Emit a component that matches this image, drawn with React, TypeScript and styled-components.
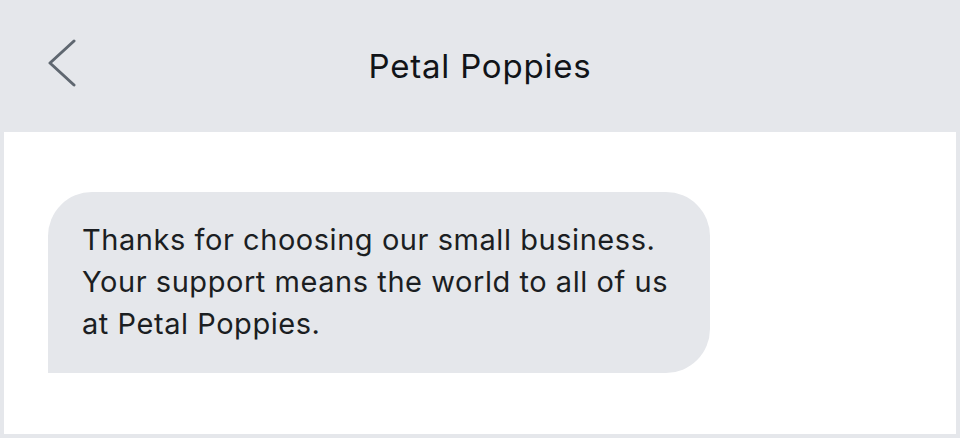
import styled, { createGlobalStyle } from 'styled-components';

const GlobalStyle = createGlobalStyle`
  html, body {
    margin: 0;
    padding: 0;
    background: #e5e7eb;
    font-family: Inter, "Noto Sans", sans-serif;
  }
`;

const Page = styled.div`
  width: 960px;
  height: 438px;
  display: flex;
  flex-direction: column;
  background: #e5e7eb;
`;

const Header = styled.header`
  height: 132px;
  flex-shrink: 0;
  display: grid;
  grid-template-columns: 120px 1fr 120px;
  align-items: center;
`;

const BackButton = styled.button`
  justify-self: start;
  margin-left: 48px;
  margin-top: -4px;
  width: 30px;
  height: 50px;
  padding: 0;
  border: none;
  background: transparent;
  display: flex;
  align-items: center;
  justify-content: center;
  cursor: pointer;
`;

const Title = styled.h1`
  margin: 0;
  text-align: center;
  font-size: 33px;
  font-weight: 400;
  color: #111418;
  letter-spacing: 0.8px;
`;

const Thread = styled.main`
  flex: 1;
  margin: 0 4px 4px;
  background: #ffffff;
  padding: 60px 44px 0;
`;

const Bubble = styled.div<{ $incoming?: boolean }>`
  box-sizing: border-box;
  width: 662px;
  padding: 27px 30px 28px 34px;
  background: #e5e7eb;
  border-radius: ${(p) => (p.$incoming ? '44px 44px 44px 0' : '44px 44px 0 44px')};
  font-size: 29px;
  line-height: 42px;
  letter-spacing: 0.55px;
  color: #1b1e22;
`;

export default function App() {
  return (
    <Page>
      <GlobalStyle />
      <Header>
        <BackButton aria-label="Back">
          <svg width="30" height="50" viewBox="0 0 30 50" fill="none">
            <path
              d="M26 2 L2 24 L26 46"
              stroke="#5f6770"
              strokeWidth="3"
              strokeLinecap="round"
              strokeLinejoin="round"
            />
          </svg>
        </BackButton>
        <Title>Petal Poppies</Title>
        <div />
      </Header>
      <Thread>
        <Bubble $incoming>
          Thanks for choosing our small business.
          <br />
          Your support means the world to all of us
          <br />
          at Petal Poppies.
        </Bubble>
      </Thread>
    </Page>
  );
}
